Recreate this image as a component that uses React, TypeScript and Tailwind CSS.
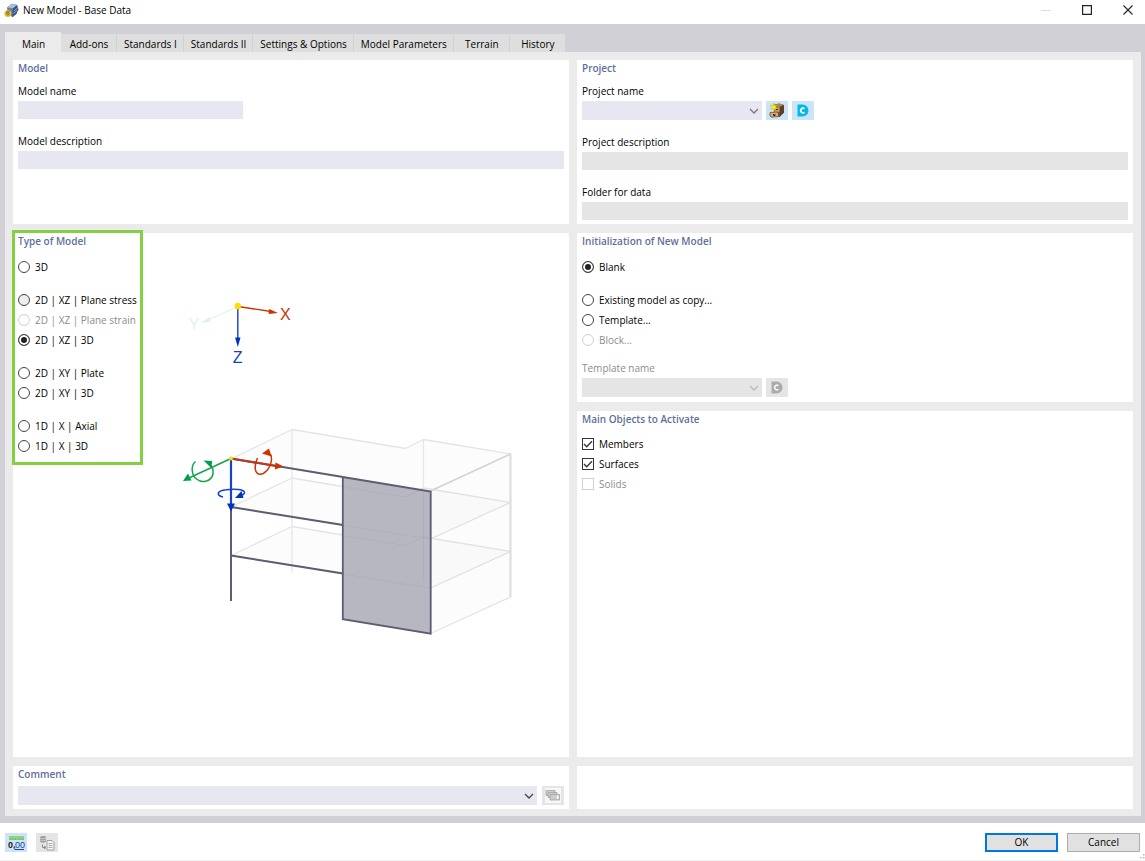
import React, { useState } from "react";

const TABS = [
  "Main",
  "Add-ons",
  "Standards I",
  "Standards II",
  "Settings & Options",
  "Model Parameters",
  "Terrain",
  "History",
];

interface Option {
  id: string;
  label: string;
  disabled?: boolean;
  hot?: boolean;
}

const MODEL_TYPES: Option[][] = [
  [{ id: "3d", label: "3D" }],
  [
    { id: "xz-stress", label: "2D | XZ | Plane stress", hot: true },
    { id: "xz-strain", label: "2D | XZ | Plane strain", disabled: true },
    { id: "xz-3d", label: "2D | XZ | 3D" },
  ],
  [
    { id: "xy-plate", label: "2D | XY | Plate" },
    { id: "xy-3d", label: "2D | XY | 3D" },
  ],
  [
    { id: "x-axial", label: "1D | X | Axial" },
    { id: "x-3d", label: "1D | X | 3D" },
  ],
];

const INIT_MODES: Option[][] = [
  [{ id: "blank", label: "Blank" }],
  [
    { id: "copy", label: "Existing model as copy..." },
    { id: "template", label: "Template..." },
    { id: "block", label: "Block...", disabled: true },
  ],
];

function Card({ title, className = "", children }: { title?: string; className?: string; children?: React.ReactNode }) {
  return (
    <section className={`bg-white px-[5px] ${className}`}>
      {title && <h2 className="h-4 leading-4 font-semibold text-[#5f6f9c]">{title}</h2>}
      {children}
    </section>
  );
}

interface FieldProps {
  id: string;
  label: string;
  className?: string;
  inputClass?: string;
  disabled?: boolean;
}

function Field({ id, label, className = "", inputClass = "", disabled }: FieldProps) {
  return (
    <div className={className}>
      <label htmlFor={id} className="block h-4 leading-4">{label}</label>
      <input
        id={id}
        type="text"
        disabled={disabled}
        className={`mt-[2px] block h-[18px] px-1 outline-none bg-[#e7e7f2] disabled:bg-[#e5e5e5] ${inputClass}`}
      />
    </div>
  );
}

function Combo({ id, label, className = "", disabled, stroke = "#777" }: { id: string; label?: string; className?: string; disabled?: boolean; stroke?: string }) {
  return (
    <div className={`relative ${className}`}>
      <select
        id={id}
        aria-label={label}
        disabled={disabled}
        className="block h-[19px] w-full appearance-none px-1 outline-none bg-[#e7e7f2] disabled:bg-[#e5e5e5]"
      />
      <svg viewBox="0 0 10 6" className="pointer-events-none absolute right-[3px] top-[7px] h-[6px] w-[10px]" fill="none" stroke={stroke} strokeWidth="1.3">
        <path d="M1 1l4 4 4-4" />
      </svg>
    </div>
  );
}

function IconButton({ label, children, active, disabled }: { label: string; children: React.ReactNode; active?: boolean; disabled?: boolean }) {
  return (
    <button
      type="button"
      aria-label={label}
      disabled={disabled}
      className={`flex h-[19px] w-[22px] shrink-0 items-center justify-center ${active ? "bg-[#cce4f7]" : "bg-[#e5e5e5]"}`}
    >
      {children}
    </button>
  );
}

function RadioGroups({ name, groups, value, onChange }: { name: string; groups: Option[][]; value: string; onChange: (id: string) => void }) {
  return (
    <div className="mt-2 flex flex-col gap-[13px]">
      {groups.map((group, i) => (
        <div key={i}>
          {group.map((o) => (
            <label key={o.id} className={`flex h-5 items-center gap-[5px] whitespace-nowrap ${o.disabled ? "text-[#8c8c8c]" : ""}`}>
              <input
                type="radio"
                name={name}
                checked={value === o.id}
                disabled={o.disabled}
                onChange={() => onChange(o.id)}
                className={`h-3 w-3 shrink-0 appearance-none rounded-full border border-[#444] checked:bg-[#222] checked:shadow-[inset_0_0_0_2px_#fff] disabled:border-[#d0d0d0] ${o.hot ? "bg-[#eee]" : "bg-white"}`}
              />
              {o.label}
            </label>
          ))}
        </div>
      ))}
    </div>
  );
}

function Check({ label, defaultChecked, disabled }: { label: string; defaultChecked?: boolean; disabled?: boolean }) {
  return (
    <label className={`flex h-5 items-center gap-[5px] ${disabled ? "text-[#8c8c8c]" : ""}`}>
      <span className="relative h-3 w-3">
        <input
          type="checkbox"
          defaultChecked={defaultChecked}
          disabled={disabled}
          className="peer block h-3 w-3 appearance-none border border-[#333] bg-white disabled:border-[#d0d0d0]"
        />
        <svg viewBox="0 0 12 12" className="pointer-events-none absolute inset-0 hidden h-3 w-3 peer-checked:block" fill="none" stroke="#333" strokeWidth="1.3">
          <path d="M2 6l2.7 2.8L10 3.2" />
        </svg>
      </span>
      {label}
    </label>
  );
}

function AppIcon() {
  return (
    <svg viewBox="0 0 15 15" className="h-[15px] w-[15px] shrink-0">
      <path d="M3 4.5L8 .8l5 1.2 1.3 4.2-2 4.8-4 3.2L3.5 9z" fill="#5f7fae" />
      <path d="M3 4.5L8 .8l5 1.2-4.3 3.6z" fill="#9db4d3" />
      <path d="M8.7 5.6L13 2l1.3 4.2-2 4.8-4 3.2z" fill="#3d5680" />
      <path d="M5 3.2l4.6 1.3M6.5 2l4.6 1.3M9.8 8l3.8-3.2M9.4 10.5l3.8-3.2" stroke="#c6d4e6" strokeWidth=".6" />
      <circle cx="3.9" cy="10.4" r="3.5" fill="#e4bd32" />
      <path d="M5.3 8.6c-1.7-.7-2.9.2-2.8 2 0 1.6 2.6 1.9 2.8.3.1-1.3-1.6-1.7-2.6-.6" fill="none" stroke="#7d621b" strokeWidth=".9" />
    </svg>
  );
}

function CrateIcon() {
  return (
    <svg viewBox="0 0 16 15" className="h-[15px] w-4">
      <path d="M4 2l6-1.5 5 1.5v7.5L10.5 14 6 13z" fill="#7d5b36" />
      <path d="M4 2l6-1.5 5 1.5-4.5 2.2z" fill="#a98557" />
      <path d="M10.5 4.200L15 2v7.5L10.5 14z" fill="#5a4026" />
      <path d="M4.5 4.5l6-.3v4.5l-4.500.5z" fill="#c69d67" />
      <path d="M1 9.5l7-.5 1.5 1v3.5l-7 .7L1 13z" fill="#d4ab72" stroke="#5b3f22" strokeWidth=".7" />
      <path d="M7 6.5h2M4.5 11v1.5H6V11" fill="none" stroke="#2d1e10" />
      <path d="M4.8 0l.8 2.700L8.500 2 6.700 4.200l1.800 2-2.800-.6L4.800 8.300 4 5.600l-2.900.6 1.800-2L1.100 2l2.900.7z" fill="#f8ee1c" stroke="#a89308" strokeWidth=".3" />
    </svg>
  );
}

function CenterIcon({ fill, mark }: { fill: string; mark: string }) {
  return (
    <svg viewBox="0 0 12 13" className="mr-px h-[13px] w-3">
      <path d="M.5.5h5a6 6 0 0 1 0 12h-5z" fill={fill} />
      <path d="M7.5 4.7a2.3 2.3 0 1 0 0 3.600" fill="none" stroke={mark} strokeWidth="1.7" />
    </svg>
  );
}

function CommentIcon() {
  return (
    <svg viewBox="0 0 16 15" className="h-[15px] w-4">
      <path d="M0 0h16v15H0z" fill="#f7f7f7" />
      <g fill="#cbcbcb" stroke="#a2a2a2" strokeWidth=".8">
        <path d="M1 2.500h9v5H1z" />
        <path d="M3 4.500h9v5H3z" />
        <path d="M5 6.500h9.500v5.500H5z" />
      </g>
      <path d="M12 7.500h1.500V11H12z" fill="#fff" />
    </svg>
  );
}

function UnitsIcon() {
  return (
    <svg viewBox="0 0 17 16" className="h-4 w-[17px]" fontFamily="Liberation Sans, sans-serif" fontSize="9">
      <path d="M1 1h15v4H1z" fill="#8ed480" />
      <path d="M2.500 5V3.500M5 5V3.500M7.500 5V3.500M10 5V3.500M12.500 5V3.500M15 5V3.500" stroke="#5da552" strokeWidth=".7" />
      <text x="0" y="13" fontWeight="700" fill="#222">0,</text>
      <text x="7" y="13" fontWeight="400" fill="#1b4696">00</text>
      <path d="M7 14.500h9" stroke="#1b4696" />
    </svg>
  );
}

function DatabaseIcon() {
  return (
    <svg viewBox="0 0 16 16" className="h-4 w-4">
      <path d="M1 2.500c0-2 6-2 6 0v4c0 1.500-6 1.500-6 0z" fill="#9c9c9c" />
      <path d="M1 3c1 1 5 1 6 0M1 5c1 1 5 1 6 0" fill="none" stroke="#d8d8d8" strokeWidth=".8" />
      <path d="M3.500 9.500v3h3M5 11l2 1.500L5 14" fill="none" stroke="#8a8a8a" />
      <path d="M8 5.500h5l2 2V15H8z" fill="#f5f5f5" stroke="#999" strokeWidth=".9" />
      <path d="M9.500 8.500h4M9.500 10.500h4M9.500 12.500h4" stroke="#999" strokeWidth=".8" />
    </svg>
  );
}

function ModelPreview() {
  return (
    <svg viewBox="180 290 340 350" className="mt-[57px] ml-[42px] h-[350px] w-[340px] shrink-0" fill="none" fontFamily="Liberation Sans, Arial, sans-serif" fontSize="16">
      {/* axes */}
      <path d="M238 306.500L208 320" stroke="#e0f3e9" strokeWidth="1.300" />
      <path d="M201.500 323l7.500-6 2 4.500z" fill="#dcf2e6" />
      <path d="M238 306.500l33 5" stroke="#cc3300" strokeWidth="1.300" />
      <path d="M278 313l-9.500 1 .8-5z" fill="#cc3300" />
      <path d="M237.800 306.500V340" stroke="#3355cc" strokeWidth="1.600" />
      <path d="M237.800 347l-2.700-9.500h5.400z" fill="#0033bb" />
      <circle cx="237.800" cy="306" r="3.200" fill="#ffdd00" />
      <text x="188.500" y="330" fill="#e0f3e9">Y</text>
      <text x="280" y="320" fill="#cc3300">X</text>
      <text x="232.800" y="363" fill="#1144cc">Z</text>

      {/* ghosted building */}
      <g fill="#000" fillOpacity=".013" stroke="#e4e4e6" strokeWidth="1.300" strokeLinejoin="round">
        <path d="M231 459l61-29.500 113.500 19L423.500 439.500l87 14.500-80 37z" />
        <path d="M231 507l61-29 113.500 19L423.500 488l87 14.500-80 36.500z" />
        <path d="M231 555.500l61-29 113.500 19L423.500 537l87 14.500-80 36.500z" />
        <path d="M430.500 491l80-37v143l-80 36.500z" />
      </g>
      <path d="M292 430v142.500M423.500 440v142" stroke="#e6e6e8" strokeWidth="1.300" />
      <path d="M430.500 491l80-37" stroke="#d4d4d8" strokeWidth="1.500" />
      <path d="M510.500 454v143" stroke="#dddde2" strokeWidth="2" />

      {/* active frame */}
      <path d="M342.800 477l87.900 14.500v142.200l-87.900-14.500z" fill="#b7b7c1" stroke="#5c5c72" strokeWidth="1.800" />
      <path d="M343 487l62.500 10L423.500 488M343 535.500l62.500 10L423.500 537h7M343 525.500l87 13.500M343 574l87 14M423.500 491v91" stroke="#777" strokeOpacity=".1" />
      <g stroke="#5c5c72" strokeWidth="2">
        <path d="M231 459v142M231 458.500l112 18.500M231 507l112 18M231 555.500l112 18" />
      </g>

      {/* degrees of freedom at the origin */}
      <path d="M231 458.500L190 477.500" stroke="#16a34e" strokeWidth="1.500" />
      <path d="M183 481l5-7.500 3.500 7z" fill="#00a046" />
      <path d="M195.500 461.500c-5 4-4 14 1 17.500 6 5 15 2 16.500-5 .5-4-.5-7-3-9.500" stroke="#16a34e" strokeWidth="1.500" />
      <path d="M203.500 460.500l8.800.5-1 7z" fill="#00a046" />
      <path d="M231 458.500l45 7.500" stroke="#bb391c" strokeWidth="2" />
      <path d="M283.500 466.500l-8.700 3 .7-7z" fill="#cc3300" />
      <path d="M257.500 458c-3.500 7-3 14.500 1 16 6 1.500 12-6 13-14 .3-2.500-.2-4.500-1.200-6" stroke="#cc3300" strokeWidth="1.500" />
      <path d="M262 453.500l7-5 2.500 8z" fill="#cc3300" />
      <path d="M231 459v46" stroke="#1546c8" strokeWidth="2.200" />
      <path d="M231 511.500l-4-8h8z" fill="#0033bb" />
      <path d="M223 497c-8-2-5-6.500 3-7.300 9-1.200 19-.2 18.500 3 0 1.300-1.500 2-3 2.800" stroke="#1546c8" strokeWidth="1.600" />
      <path d="M235 498l6.500-7 2 7z" fill="#0033bb" />
      <circle cx="231" cy="458.500" r="2" fill="#ffdd00" />
    </svg>
  );
}

export default function App() {
  const [tab, setTab] = useState("Main");
  const [modelType, setModelType] = useState("xz-3d");
  const [init, setInit] = useState("blank");

  return (
    <div className="flex min-h-screen flex-col bg-white font-['Open_Sans','Segoe_UI',sans-serif] text-[10px] font-medium text-black">
      <header className="flex h-6 items-center pr-3 pb-1 pl-1">
        <AppIcon />
        <h1 className="ml-1">New Model - Base Data</h1>
        <div className="ml-auto flex items-center gap-[31px]">
          <button type="button" aria-label="Minimize">
            <svg viewBox="0 0 10 10" className="h-[10px] w-[10px]" stroke="#ddd"><path d="M0 5.500h10" /></svg>
          </button>
          <button type="button" aria-label="Maximize">
            <svg viewBox="0 0 10 10" className="h-[10px] w-[10px]" fill="none" stroke="#222" strokeWidth="1.200"><path d="M.6.6h8.800v8.800H.6z" /></svg>
          </button>
          <button type="button" aria-label="Close">
            <svg viewBox="0 0 10 10" className="h-[10px] w-[10px]" stroke="#222" strokeWidth="1.100"><path d="M.5.5l9 9M9.500.5l-9 9" /></svg>
          </button>
        </div>
      </header>

      <main className="flex flex-1 flex-col bg-[#d0d0d6] pt-2 pr-1 pb-[7px] pl-[5px]">
        <div role="tablist" className="flex h-5 items-end">
          {TABS.map((t) => (
            <button
              key={t}
              type="button"
              role="tab"
              aria-selected={tab === t}
              onClick={() => setTab(t)}
              className={`min-w-14 pr-[6px] pl-[7px] whitespace-nowrap ${tab === t ? "h-5 bg-[#ebebeb] pt-[5px]" : "h-[18px] border-r border-[#d2d2d2] bg-[#dedede] pt-[3px]"}`}
            >
              {t}
            </button>
          ))}
        </div>

        <div className="grid flex-1 grid-cols-2 grid-rows-[auto_1fr_auto] gap-x-2 gap-y-[9px] bg-[#ebebeb] px-2 pt-2 pb-[7px]">
          <Card title="Model">
            <Field id="model-name" label="Model name" className="mt-[7px]" inputClass="w-[225px]" />
            <Field id="model-desc" label="Model description" className="mt-[14px]" inputClass="w-full" />
          </Card>

          <Card title="Project" className="pb-1">
            <label htmlFor="project-name" className="mt-[7px] block h-4 leading-4">Project name</label>
            <div className="mt-[2px] flex gap-1">
              <Combo id="project-name" className="w-[180px]" />
              <IconButton label="New project" active><CrateIcon /></IconButton>
              <IconButton label="Project center" active><CenterIcon fill="#00b9e4" mark="#fff" /></IconButton>
            </div>
            <Field id="project-desc" label="Project description" className="mt-[14px]" inputClass="w-full" disabled />
            <Field id="project-folder" label="Folder for data" className="mt-[14px]" inputClass="w-full" disabled />
          </Card>

          <Card className="flex items-start">
            <div className="relative w-[120px] shrink-0">
              <h2 className="h-4 leading-4 font-semibold text-[#5f6f9c]">Type of Model</h2>
              <RadioGroups name="model-type" groups={MODEL_TYPES} value={modelType} onChange={setModelType} />
              <div className="pointer-events-none absolute -top-[3px] -right-[5px] -bottom-[9px] -left-[6px] border-[3px] border-[#84d041]" />
            </div>
            <ModelPreview />
          </Card>

          <div className="flex flex-col gap-[9px]">
            <Card title="Initialization of New Model" className="pb-[5px]">
              <RadioGroups name="init" groups={INIT_MODES} value={init} onChange={setInit} />
              <label htmlFor="template-name" className="mt-[10px] block h-4 leading-4 text-[#8c8c8c]">Template name</label>
              <div className="mt-[2px] flex gap-1">
                <Combo id="template-name" className="w-[180px]" disabled stroke="#bbb" />
                <IconButton label="Template center" disabled><CenterIcon fill="#ababab" mark="#f0f0f0" /></IconButton>
              </div>
            </Card>
            <Card title="Main Objects to Activate" className="flex-1">
              <div className="mt-[7px]">
                <Check label="Members" defaultChecked />
                <Check label="Surfaces" defaultChecked />
                <Check label="Solids" disabled />
              </div>
            </Card>
          </div>

          <Card title="Comment" className="pb-1">
            <div className="mt-1 flex gap-[5px]">
              <Combo id="comment" label="Comment" className="flex-1" stroke="#444" />
              <IconButton label="Comment templates" disabled><CommentIcon /></IconButton>
            </div>
          </Card>
          <Card />
        </div>
      </main>

      <footer className="relative flex h-[38px] items-center gap-[9px] border-b border-[#f3f3f3] pt-[2px] pr-[5px] pl-[5px]">
        <IconButton label="Units and decimal places" active><UnitsIcon /></IconButton>
        <IconButton label="Copy data" disabled><DatabaseIcon /></IconButton>
        <button type="button" className="ml-auto h-[19px] w-[73px] border-2 border-[#0078d7] bg-[#e1e1e1]">OK</button>
        <button type="button" className="h-[19px] w-[73px] border border-[#adadad] bg-[#e1e1e1]">Cancel</button>
        <svg viewBox="0 0 6 6" className="absolute right-0 bottom-0 h-[6px] w-[6px]" fill="#bbb">
          <path d="M4 0h1.500v1.500H4zM4 3h1.500v1.500H4zM1 3h1.500v1.500H1z" />
        </svg>
      </footer>
    </div>
  );
}
